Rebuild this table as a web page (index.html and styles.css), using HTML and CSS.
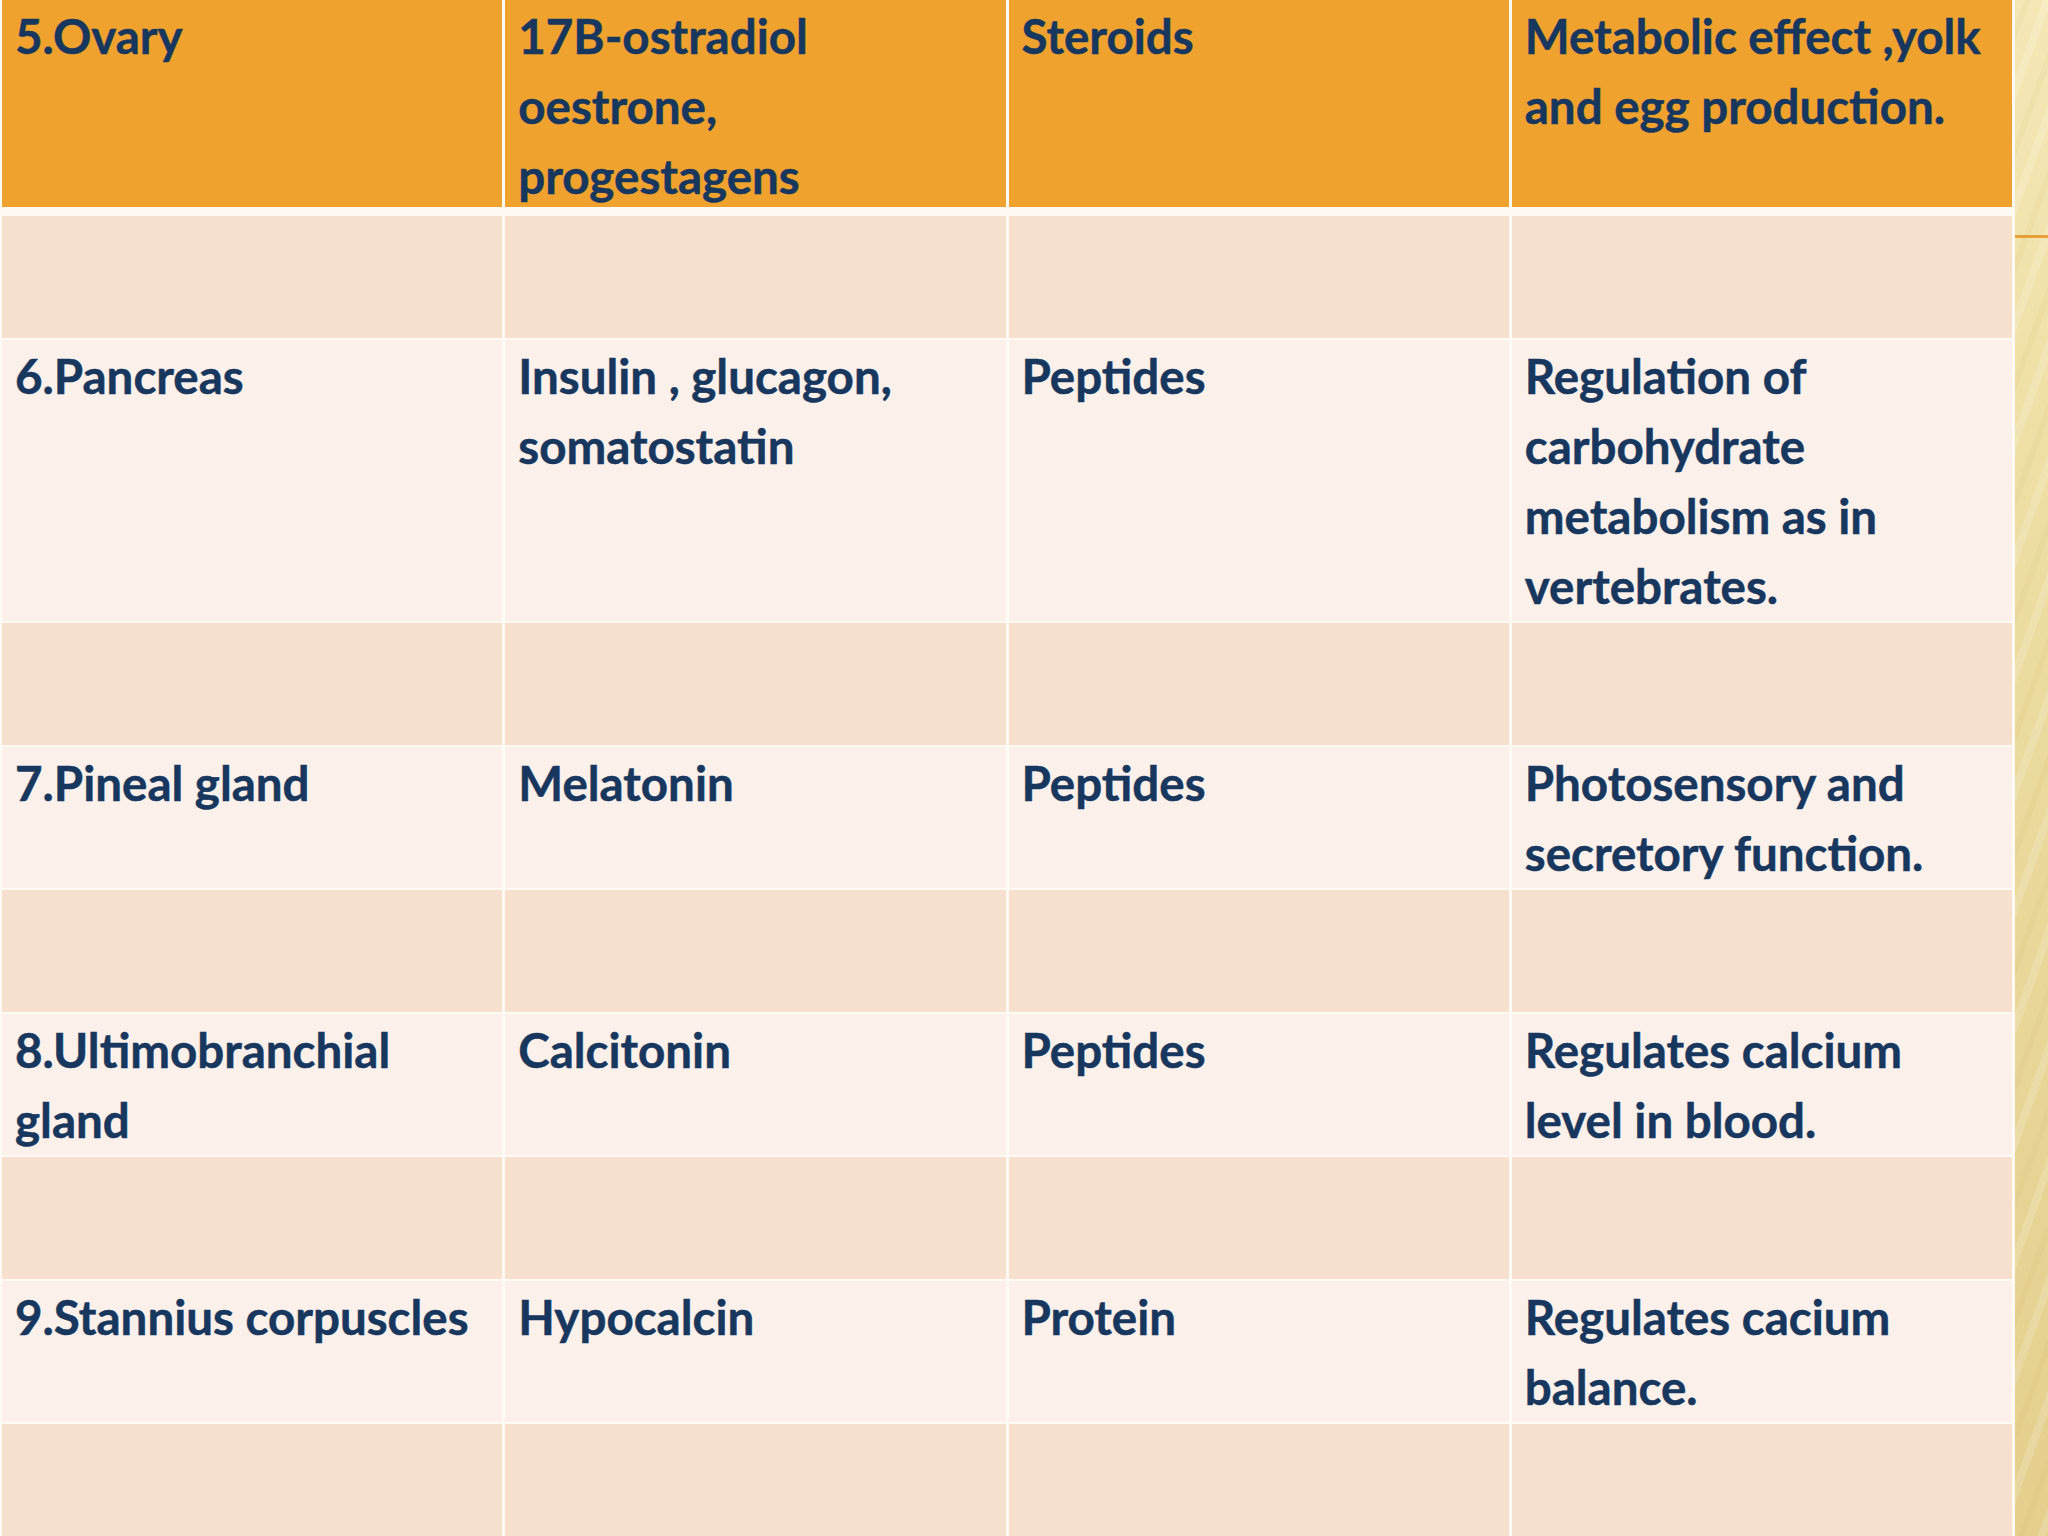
FILE: index.html
```html
<!DOCTYPE html>
<html lang="en">
<head>
<meta charset="utf-8">
<title>Fish endocrine glands</title>
<link rel="stylesheet" href="styles.css">
</head>
<body>
<table class="hormones">
  <thead>
    <tr class="head">
      <th><div class="head-cell">5.Ovary</div></th>
      <th><div class="head-cell">17B-ostradiol<br>oestrone,<br>progestagens</div></th>
      <th><div class="head-cell">Steroids</div></th>
      <th><div class="head-cell">Metabolic effect ,yolk<br>and egg production.</div></th>
    </tr>
  </thead>
  <tbody>
    <tr class="band first"><td></td><td></td><td></td><td></td></tr>
    <tr class="item">
      <td>6.Pancreas</td>
      <td>Insulin , glucagon,<br>somatostatin</td>
      <td>Peptides</td>
      <td>Regulation of<br>carbohydrate<br>metabolism as in<br>vertebrates.</td>
    </tr>
    <tr class="band"><td></td><td></td><td></td><td></td></tr>
    <tr class="item">
      <td>7.Pineal gland</td>
      <td>Melatonin</td>
      <td>Peptides</td>
      <td>Photosensory and<br>secretory function.</td>
    </tr>
    <tr class="band"><td></td><td></td><td></td><td></td></tr>
    <tr class="item">
      <td>8.Ultimobranchial<br>gland</td>
      <td>Calcitonin</td>
      <td>Peptides</td>
      <td>Regulates calcium<br>level in blood.</td>
    </tr>
    <tr class="band"><td></td><td></td><td></td><td></td></tr>
    <tr class="item">
      <td>9.Stannius corpuscles</td>
      <td>Hypocalcin</td>
      <td>Protein</td>
      <td>Regulates cacium<br>balance.</td>
    </tr>
    <tr class="band last"><td></td><td></td><td></td><td></td></tr>
  </tbody>
</table>
</body>
</html>
```

FILE: styles.css
```css
html, body {
  margin: 0;
  padding: 0;
}

body {
  width: 2048px;
  height: 1536px;
  overflow: hidden;
  background:
    linear-gradient(to bottom, transparent 235px, #e99f39 235px, #e99f39 238px, transparent 238px),
    repeating-linear-gradient(110deg, rgba(255, 255, 255, 0.16) 0 8px, rgba(255, 255, 255, 0) 8px 22px, rgba(190, 160, 80, 0.07) 22px 28px, rgba(255, 255, 255, 0) 28px 40px),
    linear-gradient(to bottom, #f5e8b6 0%, #ecdca0 40%, #e4cf8d 100%);
  font-family: "Lato", "Open Sans", sans-serif;
  color: #17375e;
}

.hormones {
  border-collapse: separate;
  border-spacing: 3px 2px;
  width: 2016px;
  margin: -3px 0 0 -1px;
  background: #fffaf4;
  table-layout: fixed;
}

.hormones th,
.hormones td {
  width: 25%;
  padding: 1px 8px 0 13px;
  vertical-align: top;
  text-align: left;
  font-size: 47.5px;
  font-weight: 700;
  line-height: 70px;
  white-space: nowrap;
  -webkit-text-stroke: 0.5px #17375e;
}

.hormones th {
  padding-top: 2px;
  background: #f0a22e;
  border-bottom: 7px solid #fffaf4;
}

.head-cell {
  height: 206px;
}

.band td {
  height: 122px;
  padding: 0;
  background: #f8e0ce;
}

.item td {
  background: #fcf0ea;
}

.band.last td {
  height: 200px;
}
```
